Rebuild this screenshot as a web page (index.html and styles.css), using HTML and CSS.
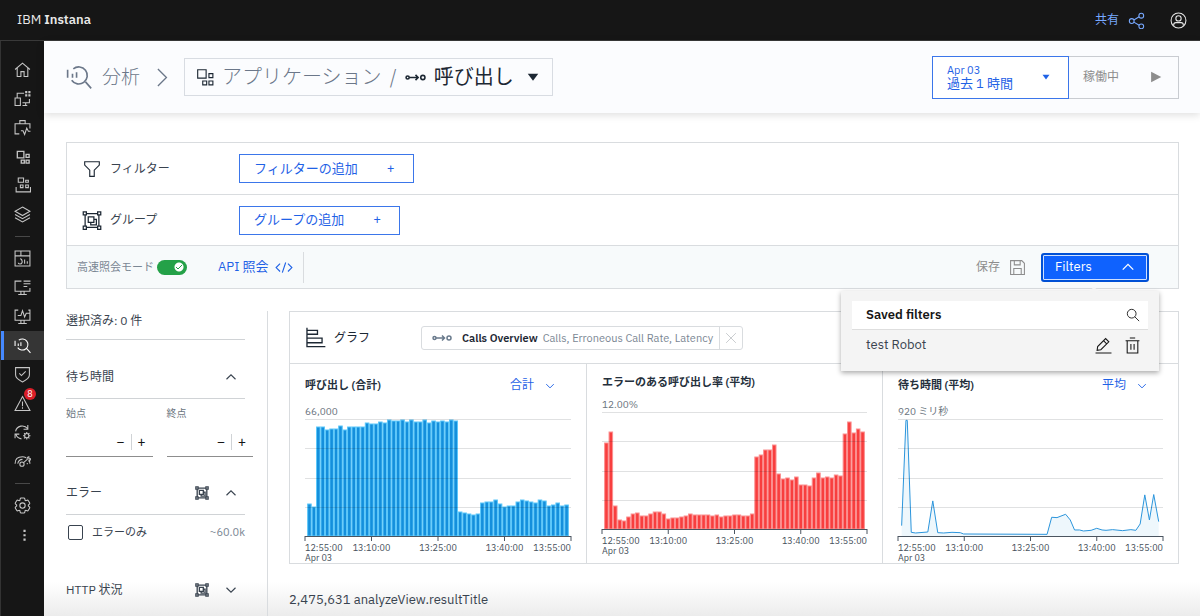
FILE: index.html
```html
<!DOCTYPE html>
<html lang="ja">
<head>
<meta charset="utf-8">
<meta name="viewport" content="width=device-width, initial-scale=1">
<title>IBM Instana</title>
<link rel="stylesheet" href="styles.css">
</head>
<body>
<svg class="sprite" aria-hidden="true">
  <symbol id="home" viewBox="0 0 32 32"><path d="M2 16 16 4l14 12M6 13v16h7v-9h6v9h7V13"/></symbol>
  <symbol id="web" viewBox="0 0 32 32"><path d="M2 15h10v14H2zM6 15V6h13M29 17v7H16M22 24v5M16 29h9"/><path class="solid" d="M21 2h4v4h-4zM27 2h4v4h-4zM21 8h4v4h-4zM27 8h4v4h-4z"/></symbol>
  <symbol id="case" viewBox="0 0 32 32"><path d="M10 28H2V9h28v9M11 9V3h10v6M13 22h4l3 7 4-12 3 6h4"/></symbol>
  <symbol id="apps" viewBox="0 0 32 32"><path d="M3 3h15v15H3zM23 10h7v7h-7zM23 23h7v7h-7zM12 23h7v7h-7z"/></symbol>
  <symbol id="platform" viewBox="0 0 32 32"><path d="M8 2h10v8H8zM22 6h5v4h-5zM22 15h5v5h-5zM12 15h5v5h-5zM4 19v9h27v-9"/></symbol>
  <symbol id="layers" viewBox="0 0 32 32"><path d="m16 2 14 8-14 8-14-8zM2 16l14 8 14-8M2 22l14 8 14-8"/></symbol>
  <symbol id="dash" viewBox="0 0 32 32"><path d="M2 2h28v28H2zM2 11h28M13 2v9M8 24c0 3 6 3 7 0 1-3 0-6-3-8M20 26v-8M25 26v-5"/></symbol>
  <symbol id="screen" viewBox="0 0 32 32"><path d="M14 4H2v19h28v-6M13 23v6M19 23v6M8 29h16M18 4h13M18 9h13M18 14h7"/></symbol>
  <symbol id="pulse" viewBox="0 0 32 32"><path d="M8 4H2v19h28V4h-3M13 23v6M19 23v6M8 29h16M7 14h6l3-9 4 12 3-7h6"/></symbol>
  <symbol id="analyze" viewBox="0 0 32 32"><path d="M9 6A10.500 10.500 0 1 1 7 20M24 22l7 8M2 7v10M8 12v5M13 10v7"/></symbol>
  <symbol id="shield" viewBox="0 0 32 32"><path d="M3 3h26v14c0 6-5 9-13 13C8 26 3 23 3 17zM10 14l4 4 8-8"/></symbol>
  <symbol id="warn" viewBox="0 0 32 32"><path d="m16 3 14 26H2zM16 12v9M16 23v3"/></symbol>
  <symbol id="cycle" viewBox="0 0 32 32"><path d="M3 14C5 3 19 0 26 9M26 2v8h-8M14 28C8 27 5 24 4 20M2 27v-8h8"/><circle cx="24" cy="22" r="4"/><path d="M24 15v3M24 26v3M17 22h3M28 22h3M19 17l2 2M27 25l2 2M19 27l2-2M27 19l2-2"/></symbol>
  <symbol id="gauge" viewBox="0 0 32 32"><path d="M2 20c0-9 6-13 14-13 3 0 5 1 7 2M7 20c1-5 4-8 9-8M28 14c2 2 2 4 2 6M25 19v2"/><circle cx="15" cy="21" r="4"/><path d="m18 18 7-6c-1-3 1-5 3-5v4h3c0 3-2 4-4 4"/></symbol>
  <symbol id="gear" viewBox="0 0 32 32"><circle cx="16" cy="16" r="5"/><path d="M27 16.8V15.200l1.900-1.700A2 2 0 0 0 29.300 11L27 7a2 2 0 0 0-2.400-.9l-2.400.8-1.300-.7-.5-2.600a2 2 0 0 0-2-1.600h-4.800a2 2 0 0 0-2 1.600l-.5 2.600-1.300.7-2.400-.8A2 2 0 0 0 5 7l-2.300 4a2 2 0 0 0 .4 2.500L5 15.200v1.600l-1.900 1.700A2 2 0 0 0 2.700 21L5 25a2 2 0 0 0 2.400.9l2.400-.8 1.300.7.5 2.600a2 2 0 0 0 2 1.600h4.800a2 2 0 0 0 2-1.600l.5-2.600 1.300-.7 2.400.8A2 2 0 0 0 27 25l2.300-4a2 2 0 0 0-.4-2.500z"/></symbol>
  <symbol id="dots" viewBox="0 0 32 32"><path class="solid" d="M17 4h5v5h-5zM17 14h5v5h-5zM17 24h5v5h-5z"/></symbol>
  <symbol id="share" viewBox="0 0 32 32"><circle cx="25" cy="7" r="4.500"/><circle cx="25" cy="27" r="4.500"/><circle cx="7" cy="17" r="4.500"/><path d="m11 15 10-6M11 19l10 6"/></symbol>
  <symbol id="user" viewBox="0 0 32 32"><circle cx="16" cy="16" r="14"/><circle cx="16" cy="12" r="5"/><path d="M7 26v-2c0-3 2-4 4-4h10c2 0 4 1 4 4v2"/></symbol>
  <symbol id="flow" viewBox="0 0 40 16"><circle cx="5" cy="8" r="3"/><circle cx="34" cy="8" r="4"/><path d="M8 8h17M20 3l5 5-5 5"/></symbol>
  <symbol id="funnel" viewBox="0 0 32 32"><path d="M3 3h26v6L20 18v11h-8V18L3 9z"/></symbol>
  <symbol id="group" viewBox="0 0 32 32"><path d="M5 7v18M27 7v18M7 5h18M7 27h18M2 2h5v5H2zM25 2h5v5h-5zM2 25h5v5H2zM25 25h5v5h-5zM10 10h9v9h-9zM19 14h4v9h-9v-4"/></symbol>
  <symbol id="code" viewBox="0 0 32 32"><path d="m9 10-7 7 7 7M23 10l7 7-7 7M19 8l-6 18"/></symbol>
  <symbol id="save" viewBox="0 0 32 32"><path d="M3 3h21l5 5v21H3zM10 3v8h11V3M9 29V18h14v11"/></symbol>
  <symbol id="up" viewBox="0 0 32 32"><path d="m4 22 12-12 12 12"/></symbol>
  <symbol id="down" viewBox="0 0 32 32"><path d="m4 10 12 12 12-12"/></symbol>
  <symbol id="right" viewBox="0 0 32 32"><path d="m9 3 13 13L9 29"/></symbol>
  <symbol id="search" viewBox="0 0 32 32"><circle cx="13" cy="13" r="10"/><path d="m20 20 10 10"/></symbol>
  <symbol id="edit" viewBox="0 0 32 32"><path d="M1 30h30M4 25l1-7L20 3l6 6-15 15zM16 7l6 6"/></symbol>
  <symbol id="trash" viewBox="0 0 32 32"><path d="M11 2h10M3 7h26M6 7v23h20V7M13 13v11M19 13v11"/></symbol>
  <symbol id="chart" viewBox="0 0 32 32"><path d="M3 1v29h28M3 5h16v6H3M3 17h23v7H3"/></symbol>
  <symbol id="close" viewBox="0 0 32 32"><path d="m3 3 26 26M29 3 3 29"/></symbol>
  <symbol id="caret" viewBox="0 0 32 32"><path class="solid" d="M2 7h28L16 26z"/></symbol>
  <symbol id="play" viewBox="0 0 32 32"><path class="solid" d="M3 2v28l27-14z"/></symbol>
</svg>

<header class="topbar">
  <a class="brand" href="#">IBM <b>Instana</b></a>
  <div class="topbar-tools">
    <a class="share" href="#">共有 <svg class="icon i16"><use href="#share"/></svg></a>
    <button class="plain" aria-label="User"><svg class="icon i16"><use href="#user"/></svg></button>
  </div>
</header>

<div class="app">
  <nav class="rail" aria-label="Main">
    <a href="#" aria-label="Home"><svg class="icon i16"><use href="#home"/></svg></a>
    <a href="#" aria-label="Websites"><svg class="icon i16"><use href="#web"/></svg></a>
    <a href="#" aria-label="Business"><svg class="icon i16"><use href="#case"/></svg></a>
    <a href="#" aria-label="Applications"><svg class="icon i14 strong"><use href="#apps"/></svg></a>
    <a href="#" aria-label="Platforms"><svg class="icon i16"><use href="#platform"/></svg></a>
    <a href="#" aria-label="Infrastructure"><svg class="icon i16"><use href="#layers"/></svg></a>
    <hr>
    <a href="#" aria-label="Dashboards"><svg class="icon i16"><use href="#dash"/></svg></a>
    <a href="#" aria-label="Logs"><svg class="icon i16"><use href="#screen"/></svg></a>
    <a href="#" aria-label="Synthetics"><svg class="icon i16"><use href="#pulse"/></svg></a>
    <a href="#" class="active" aria-label="Analytics" aria-current="page"><svg class="icon i16"><use href="#analyze"/></svg></a>
    <a href="#" aria-label="Service levels"><svg class="icon i16"><use href="#shield"/></svg></a>
    <a href="#" aria-label="Events"><svg class="icon i16"><use href="#warn"/></svg><span class="badge">8</span></a>
    <a href="#" aria-label="Automation"><svg class="icon i16"><use href="#cycle"/></svg></a>
    <a href="#" aria-label="Optimization"><svg class="icon i16"><use href="#gauge"/></svg></a>
    <hr>
    <a href="#" aria-label="Settings"><svg class="icon i16"><use href="#gear"/></svg></a>
    <a href="#" aria-label="More"><svg class="icon i14"><use href="#dots"/></svg></a>
  </nav>

  <div class="page">
    <div class="subheader">
      <div class="crumbs">
        <svg class="icon i26 muted"><use href="#analyze"/></svg>
        <a class="crumb" href="#">分析</a>
        <svg class="icon i20 muted"><use href="#right"/></svg>
        <button class="scope">
          <svg class="icon i18"><use href="#apps"/></svg>
          <span class="muted">アプリケーション</span><span class="muted">/</span>
          <svg class="icon flow-large"><use href="#flow"/></svg>
          <span class="scope-now">呼び出し</span>
          <svg class="icon i12"><use href="#caret"/></svg>
        </button>
      </div>
      <div class="timebox">
        <button class="range"><span>Apr 03<br><span class="range-span">過去 1 時間</span></span><svg class="icon i8"><use href="#caret"/></svg></button>
        <button class="live" disabled>稼働中 <svg class="icon i12"><use href="#play"/></svg></button>
      </div>
    </div>

    <main class="content">
      <section class="query">
        <div class="query-row">
          <svg class="icon i18"><use href="#funnel"/></svg><span class="query-name">フィルター</span>
          <button class="add">フィルターの追加<span>+</span></button>
        </div>
        <div class="query-row">
          <svg class="icon i20"><use href="#group"/></svg><span class="query-name">グループ</span>
          <button class="add">グループの追加<span>+</span></button>
        </div>
        <div class="query-tools">
          <label class="fast" for="fast">高速照会モード</label><span class="switch"><input id="fast" type="checkbox" role="switch" checked><svg viewBox="0 0 10 10" aria-hidden="true"><path d="m2 5 2 2 4-4"/></svg></span>
          <a class="api" href="#">API 照会 <svg class="icon i18"><use href="#code"/></svg></a>
          <button class="save" disabled>保存 <svg class="icon i16"><use href="#save"/></svg></button>
          <div class="filters">
            <button class="filters-button" aria-expanded="true">Filters <svg class="icon i14 strong"><use href="#up"/></svg></button>
            <div class="popover">
              <div class="popover-head"><span>Saved filters</span><button class="plain" aria-label="Search"><svg class="icon i14"><use href="#search"/></svg></button></div>
              <div class="popover-item"><span>test Robot</span><button class="plain" aria-label="Edit"><svg class="icon i16"><use href="#edit"/></svg></button><button class="plain" aria-label="Delete"><svg class="icon i16"><use href="#trash"/></svg></button></div>
            </div>
          </div>
        </div>
      </section>

      <div class="columns">
        <aside class="facets">
          <p class="selected">選択済み: 0 件</p>
          <section class="facet">
            <h2>待ち時間 <button class="plain" aria-label="Collapse"><svg class="icon i12"><use href="#up"/></svg></button></h2>
            <div class="bounds">
              <div class="bound"><label for="from">始点</label><div class="stepper"><input id="from" type="text" inputmode="numeric"><button class="plain" aria-label="Decrease">−</button><button class="plain" aria-label="Increase">+</button></div></div>
              <div class="bound"><label for="to">終点</label><div class="stepper"><input id="to" type="text" inputmode="numeric"><button class="plain" aria-label="Decrease">−</button><button class="plain" aria-label="Increase">+</button></div></div>
            </div>
          </section>
          <section class="facet">
            <h2>エラー <button class="plain" aria-label="Group"><svg class="icon i14 strong"><use href="#group"/></svg></button><button class="plain" aria-label="Collapse"><svg class="icon i12"><use href="#up"/></svg></button></h2>
            <div class="option"><input id="errors" type="checkbox"><label for="errors">エラーのみ</label><span>~60.0k</span></div>
          </section>
          <section class="facet">
            <h2>HTTP 状況 <button class="plain" aria-label="Group"><svg class="icon i14 strong"><use href="#group"/></svg></button><button class="plain" aria-label="Expand"><svg class="icon i12"><use href="#down"/></svg></button></h2>
          </section>
        </aside>

        <div class="results">
          <section class="graphs">
            <div class="graphs-head">
              <svg class="icon i20"><use href="#chart"/></svg><span>グラフ</span>
              <div class="preset">
                <svg class="icon flow-small"><use href="#flow"/></svg>
                <b>Calls Overview</b><span>Calls, Erroneous Call Rate, Latency</span>
                <button aria-label="Remove"><svg class="icon i12"><use href="#close"/></svg></button>
              </div>
            </div>
            <div class="charts">
              <article class="chart">
                <div class="chart-head tall"><h3>呼び出し (合計)</h3><span class="pick"><select aria-label="呼び出し"><option>合計</option></select><svg class="icon i10"><use href="#down"/></svg></span></div>
                <div class="chart-max">66,000</div>
                <svg class="plot" data-series="calls"></svg>
              </article>
              <article class="chart">
                <div class="chart-head"><h3>エラーのある呼び出し率 (平均)</h3></div>
                <div class="chart-max">12.00%</div>
                <svg class="plot" data-series="errors"></svg>
              </article>
              <article class="chart">
                <div class="chart-head tall"><h3>待ち時間 (平均)</h3><span class="pick"><select aria-label="待ち時間"><option>平均</option></select><svg class="icon i10"><use href="#down"/></svg></span></div>
                <div class="chart-max">920 ミリ秒</div>
                <svg class="plot" data-series="latency"></svg>
              </article>
            </div>
          </section>
          <p class="total">2,475,631 analyzeView.resultTitle</p>
        </div>
      </div>
    </main>
  </div>
</div>
<script src="charts.js"></script>
</body>
</html>
```
FILE: styles.css
```css
* { box-sizing: border-box; }
body {
  margin: 0;
  height: 100vh;
  display: flex;
  flex-direction: column;
  overflow: hidden;
  background: #fff;
  color: #39434f;
  font-family: "IBM Plex Sans", "Noto Sans", "Noto Sans CJK JP", sans-serif;
  font-size: 12px;
  line-height: 16px;
}
button, input, select { font: inherit; color: inherit; }
button { cursor: pointer; white-space: nowrap; }
a { color: inherit; text-decoration: none; }
h2, h3, p { margin: 0; }
.sprite { position: absolute; width: 0; height: 0; }
.icon { display: block; flex: none; fill: none; stroke: currentColor; stroke-width: 2; }
.solid { fill: currentColor; stroke: none; }
.i8 { width: 8px; height: 8px; }
.i10 { width: 10px; height: 10px; stroke-width: 3; }
.i12 { width: 12px; height: 12px; stroke-width: 3; }
.i14 { width: 14px; height: 14px; }
.i16 { width: 17px; height: 17px; }
.i18 { width: 18px; height: 18px; }
.i20 { width: 21px; height: 21px; }
.i26 { width: 26px; height: 26px; }
.strong { stroke-width: 3; }
.flow-large { width: 21px; height: 9px; stroke-width: 3; }
.flow-small { width: 20px; height: 8px; stroke-width: 3; color: #697a8c; }
.plain { padding: 0; border: 0; background: none; }
.muted { color: #6b7789; }

.topbar {
  flex: none;
  height: 41px;
  padding: 0 13px 0 17px;
  display: flex;
  justify-content: space-between;
  align-items: center;
  background: #161616;
  border-bottom: 1px solid #393939;
  color: #e8e8e8;
}
.brand { font-size: 13px; }
.brand b { font-weight: 600; }
.topbar-tools, .share { display: flex; align-items: center; }
.topbar-tools { gap: 25px; }
.share { gap: 9px; color: #78a9ff; }

.app { flex: 1; min-height: 0; display: flex; }
.rail { flex: none; width: 44px; padding-top: 14px; background: #161616; color: #c6c6c6; border-left: 1px solid #333; }
.rail a { position: relative; height: 29px; display: flex; align-items: center; justify-content: center; }
.rail .active { background: #353535; box-shadow: inset 3px 0 #4589ff; color: #fff; }
.rail hr { width: 15px; height: 1px; margin: 7px auto; border: 0; background: #484848; }
.badge {
  position: absolute;
  top: -1px;
  right: 8px;
  width: 12px;
  height: 12px;
  border-radius: 50%;
  background: #da1e28;
  color: #fff;
  font-size: 9px;
  line-height: 12px;
  text-align: center;
}

.page { flex: 1; min-width: 0; display: flex; flex-direction: column; }
.subheader {
  position: relative;
  z-index: 2;
  flex: none;
  height: 72px;
  padding: 0 21px 0 22px;
  display: flex;
  justify-content: space-between;
  align-items: center;
  background: #fbfcfe;
  box-shadow: 0 2px 8px #0002;
}
.crumbs { display: flex; align-items: center; font-size: 19px; line-height: 28px; font-weight: 300; }
.crumb { margin: 0 12px 0 10px; color: #6b7789; }
.scope {
  height: 38px;
  margin-left: 11px;
  padding: 0 13px 0 11px;
  display: flex;
  align-items: center;
  gap: 8px;
  border: 1px solid #d8dce2;
  background: #fbfcfe;
  color: #1c2733;
  font-size: 20px;
}
.scope-now { font-weight: 400; }
.scope .icon:last-child { margin-left: 5px; }
.timebox { display: flex; height: 43px; }
.range {
  width: 137px;
  padding: 0 18px 0 14px;
  display: flex;
  justify-content: space-between;
  align-items: center;
  border: 1px solid #3b76ea;
  background: #fff;
  color: #1f62e6;
  font-size: 11px;
  line-height: 14px;
  text-align: left;
}
.range-span { font-size: 13px; }
.live {
  width: 110px;
  padding: 0 16px 0 14px;
  display: flex;
  justify-content: space-between;
  align-items: center;
  border: 1px solid #c9ccd1;
  border-left: 0;
  background: #fbfcfe;
  color: #8d8d8d;
}

.content { flex: 1; min-height: 0; padding: 29px 21px 0 22px; background: linear-gradient(#fff 0, #fff calc(100% - 34px), #ececec 100%); }
.query { border: 1px solid #d9dcdf; background: #fff; }
.query-row { height: 52px; padding: 0 15px; display: flex; align-items: center; border-bottom: 1px solid #d9dcdf; color: #1c2733; }
.query-row .icon { width: 20px; }
.query-row + .query-row { height: 51px; }
.query-name { width: 129px; margin-left: 8px; color: #39434f; }
.add { height: 29px; padding: 0 18px 0 14px; display: flex; align-items: center; gap: 29px; border: 1px solid #3b76ea; background: #fff; color: #1f62e6; font-size: 13px; }
.query-tools { position: relative; height: 42px; padding: 0 29px 0 10px; display: flex; align-items: center; background: #f7fafb; }
.fast { color: #7b8794; font-size: 11px; }
.switch { position: relative; margin-left: 3px; }
.switch input { display: block; width: 30px; height: 15px; margin: 0; appearance: none; border-radius: 8px; background: radial-gradient(circle at 22px 7px, #fff 4px, #24a148 5px); }
.switch svg { position: absolute; top: 2px; right: 3px; width: 10px; height: 10px; fill: none; stroke: #24a148; pointer-events: none; }
.api { height: 31px; margin-left: 31px; padding-right: 10px; display: flex; align-items: center; gap: 7px; border-right: 1px solid #d9dcdf; color: #1f62e6; font-size: 13px; }
.save { margin-left: auto; padding: 0; display: flex; align-items: center; gap: 9px; border: 0; background: none; color: #8d8d8d; }
.filters { position: relative; margin-left: 15px; }
.filters-button {
  width: 108px;
  height: 29px;
  padding: 0 12px;
  display: flex;
  justify-content: space-between;
  align-items: center;
  border: 2px solid #0050d5;
  border-radius: 3px;
  box-shadow: inset 0 0 0 1px #cfe0ff;
  background: #0f62fe;
  color: #fff;
  font-size: 13px;
}
.popover { position: absolute; z-index: 1; top: 38px; right: -10px; width: 318px; padding: 10px 11px 12px; background: #f4f4f4; box-shadow: 0 2px 5px #0005; font-size: 13px; }
.popover::before { content: ""; position: absolute; top: -4px; right: 60px; border: solid transparent; border-width: 0 5px 4px; border-bottom-color: #f4f4f4; }
.popover-head { height: 29px; padding: 0 8px 0 14px; display: flex; justify-content: space-between; align-items: center; border-bottom: 1px solid #dedede; background: #fff; color: #161616; font-weight: 600; }
.popover-item { height: 29px; padding: 2px 7px 0 14px; display: flex; align-items: center; gap: 12px; color: #161616; }
.popover-item span { flex: 1; color: #39434f; }

.columns { display: flex; margin-top: 22px; }
.facets { flex: none; width: 202px; height: 320px; padding-right: 22px; border-right: 1px solid #d9dcdf; }
.selected { height: 29px; padding-top: 2px; border-bottom: 1px solid #d0d3d6; }
.facet h2 { height: 59px; padding: 15px 8px 0 0; display: flex; align-items: center; gap: 16px; border-bottom: 1px solid #d0d3d6; font-size: 12px; font-weight: 400; }
.facet h2 button { color: #39434f; }
.facet h2 button:first-of-type { margin-left: auto; }
.facet:last-child h2 { border: 0; }
.bounds { display: flex; gap: 14px; height: 57px; margin-right: -8px; padding-top: 7px; }
.bound { flex: 1; color: #6b7580; font-size: 10px; }
.bound label { display: block; }
.stepper { display: flex; align-items: center; height: 35px; padding: 6px 6px 0 0; border-bottom: 1px solid #8d8d8d; color: #161616; font-size: 14px; }
.stepper input { flex: 1; width: 0; height: 20px; padding: 0; border: 0; background: none; outline: 0; }
.stepper button { width: 10px; text-align: center; }
.stepper button:first-of-type { width: 16px; padding-right: 5px; border-right: 1px solid #d0d3d6; margin-right: 5px; }
.option { height: 38px; padding: 0 0 4px 2px; display: flex; align-items: center; }
.option input { appearance: none; width: 15px; height: 15px; margin: 0 9px 0 0; border: 1px solid #39434f; border-radius: 2px; background: #fff; }
.option label { flex: 1; font-size: 11px; }
.option span { color: #7b8794; font-size: 11px; }

.results { flex: 1; min-width: 0; margin-left: 21px; }
.graphs { border: 1px solid #d9dcdf; background: #fff; }
.graphs-head { height: 52px; padding: 0 15px; display: flex; align-items: center; gap: 8px; border-bottom: 1px solid #d9dcdf; color: #1c2733; }
.preset { display: flex; align-items: center; height: 24px; margin-left: 43px; padding-left: 10px; border: 1px solid #d9dcdf; border-radius: 3px; font-size: 11px; line-height: 16px; }
.preset b { margin: 0 5px 0 10px; font-weight: 600; color: #1c2733; }
.preset span { color: #7b8794; }
.preset button { height: 22px; width: 23px; margin-left: 6px; padding: 0 5px; border: 0; border-left: 1px solid #d9dcdf; background: none; color: #b8bcc0; }
.preset button .icon { stroke-width: 2; }
.charts { display: grid; grid-template-columns: repeat(3, 1fr); }
.chart { min-width: 0; padding: 8px 15px 0; }
.chart + .chart { border-left: 1px solid #d9dcdf; }
.chart-head { height: 19px; display: flex; justify-content: space-between; align-items: center; color: #25303c; }
.chart-head.tall { height: 26px; }
.chart h3 { font-size: 11px; font-weight: 600; }
.pick { position: relative; margin-right: 16px; color: #1f62e6; }
.pick select { appearance: none; padding: 0 20px 0 0; border: 0; background: none; }
.pick .icon { position: absolute; right: 0; top: 4px; pointer-events: none; }
.chart-max { height: 15px; margin-top: 6px; color: #6b7580; font-size: 10px; line-height: 15px; }
.plot { display: block; width: 100%; height: 144px; overflow: visible; }
.plot svg { overflow: visible; }
.grid { stroke: #101820; stroke-opacity: .13; }
.axis { stroke: #4b5560; }
.tick { fill: #454f5a; font-size: 9px; }
.bar-calls { fill: #148fdc; stroke: #5cc8fa; stroke-width: 1; }
.bar-errors { fill: #f83e3e; stroke: #fb8f8f; stroke-width: 1; }
.area { fill: #eef7fc; }
.line { fill: none; stroke: #2b95dc; stroke-linejoin: round; vector-effect: non-scaling-stroke; }
.total { margin-top: 28px; font-size: 13px; }
```
FILE: charts.js
```js
const NS = 'http://www.w3.org/2000/svg';
const HEIGHT = 117;
const SLOTS = 60;

const series = {
  calls: [32, 29,
    109, 109, 106, 107, 107, 110, 106, 109, 109, 109, 109, 113, 112, 112, 114, 113, 116, 115, 115, 116,
    114, 116, 114, 114, 116, 113, 115, 114, 115, 114, 116, 115,
    24, 23, 22, 21, 22,
    33, 34, 34, 36, 32, 29, 30, 30, 34, 36, 35, 34, 33, 36, 35, 30, 31, 33, 30, 31],
  errors: [86, 97, 23, 9, 8, 12, 15, 16, 13, 13, 15, 17, 17, 15, 10, 11, 11, 12, 13, 15, 14, 14, 14, 14, 13,
    14, 12, 13, 13, 14, 14, 13, 13, 15,
    72, 74, 79, 79, 84,
    55, 50, 51, 49, 52, 44, 44, 43, 51, 56, 51, 52, 51, 54, 53,
    95, 107, 96, 100, 97],
};

// Latency samples on a 800 x 350 canvas, y measured from the top.
const latency = [[11, 319], [24, 4], [28, 4], [40, 339], [53, 341], [90, 338], [105, 245], [120, 340],
  [138, 341], [163, 339], [188, 340], [198, 344], [450, 345], [464, 294], [480, 295], [506, 285], [520, 302],
  [533, 332], [548, 332], [560, 335], [583, 333], [600, 327], [616, 332], [628, 333], [648, 331], [678, 334],
  [703, 331], [718, 333], [731, 314], [745, 227], [759, 302], [772, 226], [787, 307]];

function add(parent, name, attrs, text) {
  const el = document.createElementNS(NS, name);
  for (const key in attrs) el.setAttribute(key, attrs[key]);
  if (text) el.textContent = text;
  parent.appendChild(el);
  return el;
}

document.querySelectorAll('.plot').forEach((svg) => {
  const name = svg.dataset.series;
  if (series[name]) {
    series[name].forEach((h, i) => {
      add(svg, 'rect', {
        class: 'bar-' + name,
        x: ((i + 0.6) / SLOTS) * 100 + '%',
        y: HEIGHT - h,
        width: (0.8 / SLOTS) * 100 + '%',
        height: h,
      });
    });
  } else {
    const box = add(svg, 'svg', { viewBox: '0 0 800 350', width: '100%', height: HEIGHT, preserveAspectRatio: 'none' });
    const points = latency.map((p) => p.join(' ')).join('L');
    add(box, 'path', { class: 'area', d: 'M11 350L' + points + 'L787 350Z' });
    add(box, 'path', { class: 'line', d: 'M' + points });
  }
  for (let i = 0; i < 4; i++) {
    const y = Math.round((HEIGHT / 4) * i) + 0.5;
    add(svg, 'line', { class: 'grid', x1: 0, x2: '100%', y1: y, y2: y });
  }
  add(svg, 'line', { class: 'axis', x1: 0, x2: '100%', y1: HEIGHT + 0.5, y2: HEIGHT + 0.5 });
  ['12:55:00', '13:10:00', '13:25:00', '13:40:00', '13:55:00'].forEach((label, i) => {
    const x = i * 25 + '%';
    add(svg, 'line', { class: 'axis', x1: x, x2: x, y1: HEIGHT, y2: HEIGHT + 5 });
    add(svg, 'text', { class: 'tick', x: x, y: HEIGHT + 15, 'text-anchor': i === 0 ? 'start' : i === 4 ? 'end' : 'middle' }, label);
  });
  add(svg, 'text', { class: 'tick', x: 0, y: HEIGHT + 25 }, 'Apr 03');
});
```
